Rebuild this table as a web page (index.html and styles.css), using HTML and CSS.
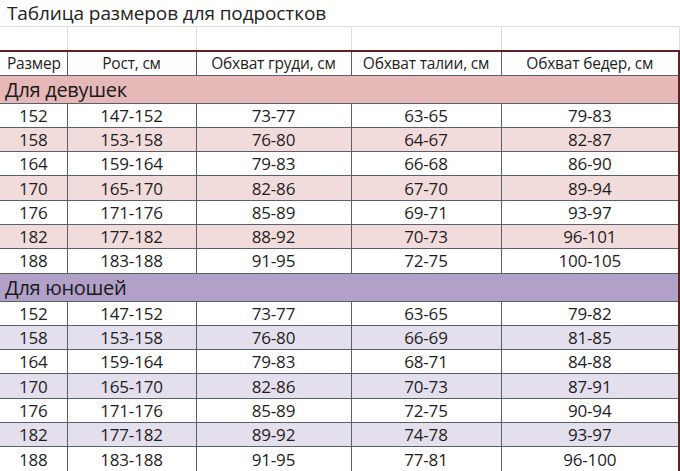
FILE: index.html
```html
<!DOCTYPE html>
<html lang="ru">
<head>
<meta charset="utf-8">
<title>Таблица размеров для подростков</title>
<link rel="stylesheet" href="styles.css">
</head>
<body>
<div class="sheet">
  <div class="title">Таблица размеров для подростков</div>
  <table class="sizes">
    <colgroup>
      <col class="c1"><col class="c2"><col class="c3"><col class="c4"><col class="c5">
    </colgroup>
    <tr class="blank"><td></td><td></td><td></td><td></td><td></td></tr>
    <tr class="head"><td class="left">Размер</td><td>Рост, см</td><td>Обхват груди, см</td><td>Обхват талии, см</td><td>Обхват бедер, см</td></tr>
    <tr class="section girls"><td colspan="5">Для девушек</td></tr>
    <tr class="g0"><td>152</td><td>147-152</td><td>73-77</td><td>63-65</td><td>79-83</td></tr>
    <tr class="g1"><td>158</td><td>153-158</td><td>76-80</td><td>64-67</td><td>82-87</td></tr>
    <tr class="g0"><td>164</td><td>159-164</td><td>79-83</td><td>66-68</td><td>86-90</td></tr>
    <tr class="g1"><td>170</td><td>165-170</td><td>82-86</td><td>67-70</td><td>89-94</td></tr>
    <tr class="g0"><td>176</td><td>171-176</td><td>85-89</td><td>69-71</td><td>93-97</td></tr>
    <tr class="g1"><td>182</td><td>177-182</td><td>88-92</td><td>70-73</td><td>96-101</td></tr>
    <tr class="g0"><td>188</td><td>183-188</td><td>91-95</td><td>72-75</td><td>100-105</td></tr>
    <tr class="section boys"><td colspan="5">Для юношей</td></tr>
    <tr class="b0"><td>152</td><td>147-152</td><td>73-77</td><td>63-65</td><td>79-82</td></tr>
    <tr class="b1"><td>158</td><td>153-158</td><td>76-80</td><td>66-69</td><td>81-85</td></tr>
    <tr class="b0"><td>164</td><td>159-164</td><td>79-83</td><td>68-71</td><td>84-88</td></tr>
    <tr class="b1"><td>170</td><td>165-170</td><td>82-86</td><td>70-73</td><td>87-91</td></tr>
    <tr class="b0"><td>176</td><td>171-176</td><td>85-89</td><td>72-75</td><td>90-94</td></tr>
    <tr class="b1"><td>182</td><td>177-182</td><td>89-92</td><td>74-78</td><td>93-97</td></tr>
    <tr class="b0"><td>188</td><td>183-188</td><td>91-95</td><td>77-81</td><td>96-100</td></tr>
  </table>
</div>
</body>
</html>
```

FILE: styles.css
```css
html, body {
  margin: 0;
  padding: 0;
  background: #ffffff;
}

.sheet {
  width: 680px;
  height: 471px;
  overflow: hidden;
  font-family: "Open Sans", "Noto Sans", "Liberation Sans", sans-serif;
  color: #1e1e1e;
}

.title {
  height: 27px;
  line-height: 26px;
  padding-left: 7px;
  font-size: 19px;
  letter-spacing: -0.1px;
  color: #222;
  box-sizing: border-box;
  border-bottom: 1px solid #dedede;
}

.sizes {
  border-collapse: collapse;
  table-layout: fixed;
  width: 679px;
  font-size: 15.5px;
  letter-spacing: -0.2px;
}

.c1 { width: 67px; }
.c2 { width: 129px; }
.c3 { width: 155px; }
.c4 { width: 150px; }
.c5 { width: 178px; }

.sizes td {
  padding: 0;
  text-align: center;
  border: 1px solid #56606e;
  white-space: nowrap;
  overflow: hidden;
}

.sizes td:first-child {
  border-left: none;
}

.sizes td:last-child {
  border-right: 2px solid #5e2424;
}

.blank td {
  height: 22.5px;
  border: 1px solid #dcdcdc;
  border-top: none;
}

.blank td:last-child {
  border-right: 1px solid #dcdcdc;
}

.head td {
  height: 23px;
  border-top: 2px solid #5e2424;
  font-size: 15.5px;
}

.head td.left {
  text-align: left;
  padding-left: 7px;
  letter-spacing: -0.2px;
}

.section td {
  height: 26px;
  text-align: left;
  padding-left: 5px;
  font-size: 20px;
  letter-spacing: -0.3px;
  color: #1a1a1a;
}

.girls td { background: #e6b8b7; }
.boys td { background: #b1a0c7; }

.g0 td, .b0 td, .g1 td, .b1 td {
  height: 23.3px;
  font-size: 17px;
}

.g0 td, .b0 td { background: #ffffff; }
.g1 td { background: #f2dcdb; }
.b1 td { background: #e4dfec; }
```
